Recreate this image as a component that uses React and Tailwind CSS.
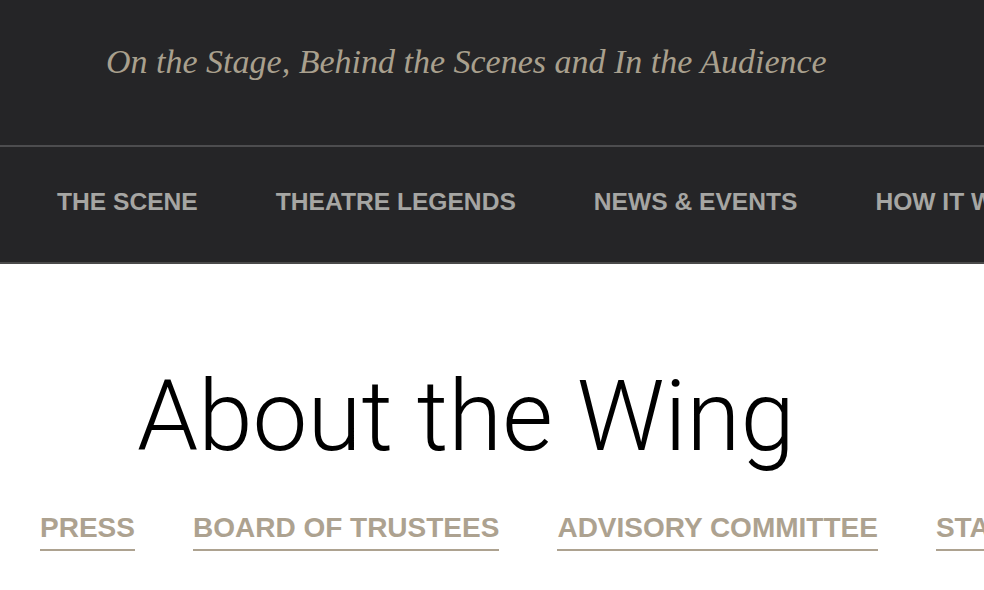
export default function App() {
  const nav = ["The Scene", "Theatre Legends", "News & Events", "How It Works"];
  const tabs = ["Press", "Board of Trustees", "Advisory Committee", "Staff"];

  return (
    <div className="w-[984px] h-[590px] overflow-hidden bg-white">
      {/* Header */}
      <header className="bg-[#252527]">
        <div className="h-[145px] flex items-center pl-[106px] pb-[22px]">
          <p className="text-[34px] italic text-[#a9a08e] whitespace-nowrap font-['Liberation_Serif',serif]">
            On the Stage, Behind the Scenes and In the Audience
          </p>
        </div>
        <nav className="border-t-2 border-[#4d4d4f] border-b-2 border-b-[#4a4a4a] h-[119px] flex items-center gap-[78px] pl-[57px] pb-[4px] whitespace-nowrap">
          {nav.map((n) => (
            <a key={n} className="uppercase font-bold text-[24.6px] text-[#a6a6a3] font-['Liberation_Sans',sans-serif]">
              {n}
            </a>
          ))}
        </nav>
      </header>

      {/* Title */}
      <h1 className="pl-[137px] pt-[104px] text-[98px] leading-none font-light text-black font-['Roboto',sans-serif] whitespace-nowrap">
        About the Wing
      </h1>

      {/* Sub nav */}
      <div className="flex gap-[58px] pl-[40px] pt-[48px] whitespace-nowrap">
        {tabs.map((t) => (
          <a
            key={t}
            className="uppercase font-bold text-[28px] leading-none text-[#ada290] pb-[7px] border-b-2 border-[#ada290] font-['Liberation_Sans',sans-serif]"
          >
            {t}
          </a>
        ))}
      </div>
    </div>
  );
}
